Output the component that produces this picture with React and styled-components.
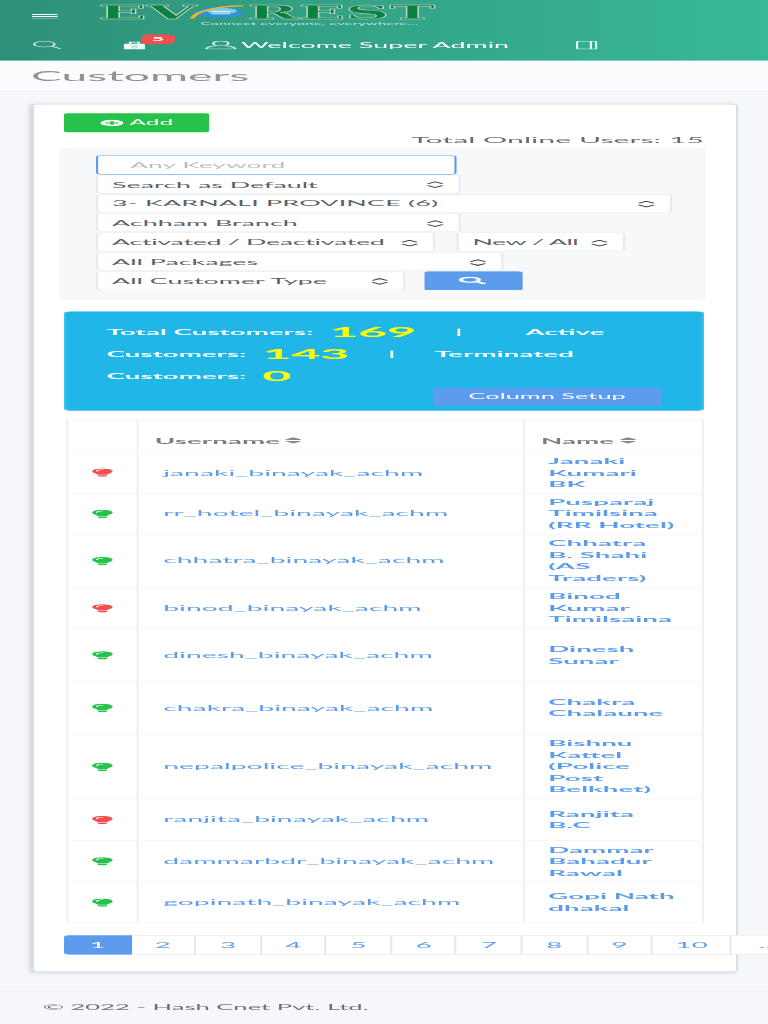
import React from "react";
import styled, { createGlobalStyle } from "styled-components";
import { FaLightbulb, FaPlusCircle, FaSearch, FaSort } from "react-icons/fa";

const GlobalStyle = createGlobalStyle`
  html, body {
    margin: 0;
    padding: 0;
    background: #f5f7fa;
    overflow: hidden;
  }
  #root {
    width: 768px;
    height: 1024px;
    overflow: hidden;
  }
  * {
    box-sizing: border-box;
  }
`;

// the whole page was photographed stretched, so it is built at phone width and scaled
const Stage = styled.div`
  width: 360px;
  min-height: 1736px;
  transform: scale(2.1333, 0.59);
  transform-origin: 0 0;
  font-family: Lato, "Open Sans", sans-serif;
  font-size: 13px;
  line-height: 19.5px;
  color: #58666e;
`;

const Header = styled.header`
  height: 103px;
  background: linear-gradient(90deg, #2e9178, #38b897);
  color: #fff;
`;

const HeaderTop = styled.div`
  height: 52px;
  display: flex;
  align-items: center;
  padding-left: 14.5px;
`;

const MenuBars = styled.div`
  width: 12px;
  height: 8.4px;
  margin-top: 2px;
  background: repeating-linear-gradient(#fff 0 1.6px, transparent 1.6px 3.4px);
`;

const LogoWrap = styled.svg`
  width: 162px;
  height: 46px;
  margin-left: 19.5px;
  flex-shrink: 0;
  overflow: visible;
`;

const HeaderBar = styled.div`
  height: 51px;
  display: flex;
  align-items: center;
  padding-left: 14.5px;
  padding-bottom: 3px;
`;

const Slot = styled.div`
  width: ${(p) => p.$width}px;
  margin-left: ${(p) => p.$left || 0}px;
  height: 16px;
  flex-shrink: 0;
  position: relative;
  display: flex;
  align-items: center;
`;

const Badge = styled.span`
  position: absolute;
  left: 8px;
  top: -10px;
  width: 16px;
  height: 17px;
  border-radius: 5px;
  background: #f05050;
  color: #fff;
  font-size: 10px;
  font-weight: 700;
  line-height: 17px;
  text-align: center;
`;

const Welcome = styled.span`
  font-size: 12.6px;
  margin-top: 2px;
  white-space: nowrap;
`;

const TitleBar = styled.div`
  height: 53px;
  background: #fbfcfd;
  border-bottom: 2px solid #edf0f4;
  padding: 14px 14.5px 0;
`;

const PageTitle = styled.h1`
  margin: 0;
  font-size: 21.7px;
  font-weight: 400;
  line-height: 24px;
  color: #929292;
`;

const Card = styled.main`
  width: 331px;
  margin: 20px 0 0 14.5px;
  padding: 15px 14.5px 28px;
  background: #fff;
  border: 1px solid #d6e0ea;
  border-radius: 3px;
  box-shadow: -1px 1px 3px rgba(120, 135, 150, 0.25);
`;

const AddButton = styled.button`
  display: flex;
  align-items: center;
  justify-content: center;
  gap: 3px;
  width: 68px;
  height: 32px;
  border: 0;
  border-radius: 2px;
  background: #27c24c;
  color: #fff;
  font: inherit;
  font-size: 11.5px;
  padding: 0;
`;

const OnlineUsers = styled.div`
  height: 22.5px;
  margin-top: 4px;
  text-align: right;
  font-size: 14.2px;
  line-height: 20px;
  color: #6b6b6b;
`;

const FilterPanel = styled.section`
  margin: 0 -1px 0 -2px;
  height: 257px;
  padding: 12.5px 0 0 17px;
  background: #f7f8fa;
  border-radius: 4px;
`;

const KeywordInput = styled.input`
  display: block;
  width: 169px;
  height: 32.5px;
  padding: 0 0 0 15px;
  border: 1px solid #5d9cec;
  border-radius: 3px;
  background: #fff;
  font: inherit;
  font-size: 12.4px;
  &::placeholder {
    color: #b6bcc4;
    opacity: 1;
  }
`;

const FieldRow = styled.div`
  display: flex;
  align-items: center;
  gap: ${(p) => p.$gap || 0}px;
  height: 32.8px;
`;

const SelectBox = styled.div`
  width: ${(p) => p.$width}px;
  height: 32px;
  flex-shrink: 0;
  display: flex;
  align-items: center;
  justify-content: space-between;
  padding: 3px 7.5px 0 6.5px;
  background: #fff;
  border: 1px solid #e6ebee;
  border-radius: 3px;
  font-size: 12.6px;
  letter-spacing: ${(p) => p.$spacing || 0}px;
  color: #5a6168;
  white-space: nowrap;
`;

const SearchButton = styled.button`
  width: 45.5px;
  height: 32px;
  border: 1px solid #5d9cec;
  border-radius: 2px;
  background: #5d9cec;
  color: #fff;
  padding: 0;
  display: flex;
  align-items: center;
  justify-content: center;
`;

const StatsPanel = styled.section`
  margin-top: 20.5px;
  height: 168px;
  padding: 15px 19px 0;
  background: #20b6e8;
  border: 1px solid #3cc0ec;
  border-radius: 3px;
  color: #fff;
`;

const StatsLine = styled.div`
  height: 37.5px;
  display: flex;
  align-items: center;
  white-space: nowrap;
`;

const StatLabel = styled.span`
  font-weight: 700;
  font-size: 13px;
`;

const StatValue = styled.span`
  margin-left: ${(p) => p.$left}px;
  width: ${(p) => p.$width}px;
  font-size: 23.4px;
  font-weight: 700;
  color: #ffff00;
`;

const Pipe = styled.span`
  margin-left: ${(p) => p.$left}px;
  margin-right: ${(p) => p.$right}px;
  font-weight: 700;
`;

const ColumnButton = styled.button`
  display: block;
  width: 107px;
  height: 31px;
  margin-left: auto;
  border: 0;
  border-radius: 2px;
  background: #5d9cec;
  color: #fff;
  font: inherit;
  font-size: 11.9px;
  padding: 0;
`;

const TableWrap = styled.div`
  margin: 15px 0 0 0.5px;
  width: 299px;
  border: 1px solid #eef0f2;
  overflow: hidden;
`;

const Table = styled.table`
  width: 100%;
  border-collapse: collapse;
  table-layout: fixed;
`;

const HeadCell = styled.th`
  height: 54.5px;
  padding: 0 0 9px 7.6px;
  vertical-align: bottom;
  text-align: left;
  font-weight: 700;
  color: #7d7d7d;
  border-left: 1px solid #eef0f2;
  &:first-child {
    border-left: 0;
  }
  svg {
    vertical-align: -1px;
    color: #888;
  }
`;

const Row = styled.tr`
  height: ${(p) => 9.8 + p.$lines * 20}px;
  border-top: 1px solid #f1f2f4;
`;

const Cell = styled.td`
  padding: 0;
  border-left: 1px solid #eef0f2;
  vertical-align: middle;
  &:first-child {
    border-left: 0;
  }
`;

const StatusCell = styled(Cell)`
  text-align: center;
  line-height: 0;
  color: ${(p) => (p.$on ? "#27c24c" : "#f05050")};
`;

const UserLink = styled.a`
  display: block;
  padding-left: 11.5px;
  font-size: 13.3px;
  color: #5d9cec;
  white-space: nowrap;
`;

const NameLink = styled.a`
  display: block;
  padding-left: 11px;
  color: #5d9cec;
  font-weight: 700;
  white-space: pre-line;
`;

const Pagination = styled.nav`
  display: flex;
  margin-top: 20px;
  height: 33px;
`;

const PageButton = styled.span`
  flex-shrink: 0;
  width: ${(p) => p.$width || 30.6}px;
  height: 33px;
  line-height: 31px;
  text-align: center;
  background: ${(p) => (p.$active ? "#5d9cec" : "#fff")};
  color: ${(p) => (p.$active ? "#fff" : "#5d9cec")};
  border: 1px solid ${(p) => (p.$active ? "#5d9cec" : "#e4e8ec")};
  border-left-width: ${(p) => (p.$active ? 1 : 0)}px;
  border-radius: ${(p) => (p.$active ? "3px 0 0 3px" : "0")};
`;

const Footer = styled.footer`
  margin-top: 31.6px;
  height: 60px;
  padding: 17px 20px 0;
  border-top: 2px solid #edf0f4;
  font-size: 12px;
  color: #6f6f6f;
`;

const Arrows = () => (
  <svg width="8" height="12" viewBox="0 0 8 12" fill="none" stroke="#444" strokeWidth="1.3">
    <path d="M.5 4.5 4 1.2 7.5 4.5M.5 7.5 4 10.8 7.5 7.5" />
  </svg>
);

const SearchLine = () => (
  <svg width="14" height="14" viewBox="0 0 14 14" fill="none" stroke="#d8f0e8" strokeWidth="1">
    <circle cx="5.8" cy="5.8" r="4.8" />
    <path d="M9.3 9.3 13.5 13.5" />
  </svg>
);

const Suitcase = () => (
  <svg width="10" height="15" viewBox="0 0 10 15">
    <path d="M3 5V2.5H7V5" fill="none" stroke="#f2fbf8" strokeWidth="1.2" />
    <rect y="5" width="10" height="10" rx="1" fill="#f2fbf8" />
    <rect x="3.4" y="7" width="3.2" height="6" fill="#c8e8de" />
  </svg>
);

const UserLine = () => (
  <svg width="15" height="15" viewBox="0 0 15 15" fill="none" stroke="#eafaf5" strokeWidth="1">
    <ellipse cx="7.5" cy="4.6" rx="3.6" ry="4" />
    <path d="M5.4 8.6C2.6 9.6.8 11 .6 14H14.4C14.2 11 12.4 9.6 9.6 8.6" />
  </svg>
);

const TabletLine = () => (
  <svg width="10" height="15" viewBox="0 0 10 15" fill="none" stroke="#eafaf5" strokeWidth="1">
    <rect x=".5" y=".8" width="9" height="13.4" rx="1" />
    <path d="M7 .8V14.2" />
  </svg>
);

const Logo = () => (
  <LogoWrap viewBox="0 0 162 46">
    <text
      x="0"
      y="29"
      fontFamily="DejaVu Serif, serif"
      fontWeight="700"
      fontSize="30"
      fill="#0b8140"
      stroke="#c9d6ce"
      strokeWidth="0.7"
      textLength="46"
      lengthAdjust="spacingAndGlyphs"
    >
      EV
    </text>
    <text
      x="70"
      y="29"
      fontFamily="DejaVu Serif, serif"
      fontWeight="700"
      fontSize="30"
      fill="#0b8140"
      stroke="#c9d6ce"
      strokeWidth="0.7"
      textLength="88"
      lengthAdjust="spacingAndGlyphs"
    >
      REST
    </text>
    <ellipse cx="57" cy="18" rx="11" ry="9.5" fill="#2f93cf" />
    <ellipse cx="58" cy="15.5" rx="7" ry="5" fill="#7fcbe9" />
    <path d="M44 28C46 15 57 7 68 7" fill="none" stroke="#f2b632" strokeWidth="2.2" />
    <path d="M53 16.5H62M53 20.5H62" stroke="#e4f5fa" strokeWidth="1.4" />
    <text x="48" y="39" fontFamily="Lato, sans-serif" fontSize="6.9" fill="#cdebe1" letterSpacing=".1">
      Connect everyone, everywhere...
    </text>
  </LogoWrap>
);

const customers = [
  { user: "janaki_binayak_achm", name: "Janaki\nKumari\nBK", on: false, lines: 3 },
  { user: "rr_hotel_binayak_achm", name: "Pusparaj\nTimilsina\n(RR Hotel)", on: true, lines: 3 },
  { user: "chhatra_binayak_achm", name: "Chhatra\nB. Shahi\n(AS\nTraders)", on: true, lines: 4 },
  { user: "binod_binayak_achm", name: "Binod\nKumar\nTimilsaina", on: false, lines: 3 },
  { user: "dinesh_binayak_achm", name: "Dinesh\nSunar", on: true, lines: 4 },
  { user: "chakra_binayak_achm", name: "Chakra\nChalaune", on: true, lines: 4 },
  { user: "nepalpolice_binayak_achm", name: "Bishnu\nKattel\n(Police\nPost\nBelkhet)", on: true, lines: 5 },
  { user: "ranjita_binayak_achm", name: "Ranjita\nB.C", on: false, lines: 3 },
  { user: "dammarbdr_binayak_achm", name: "Dammar\nBahadur\nRawal", on: true, lines: 3 },
  { user: "gopinath_binayak_achm", name: "Gopi Nath\ndhakal", on: true, lines: 3 },
];

const pages = ["2", "3", "4", "5", "6", "7", "8", "9"];

export default function App() {
  return (
    <>
      <GlobalStyle />
      <Stage>
        <Header>
          <HeaderTop>
            <MenuBars />
            <Logo />
          </HeaderTop>
          <HeaderBar>
            <Slot $width={43.5}>
              <SearchLine />
            </Slot>
            <Slot $width={38}>
              <Suitcase />
              <Badge>5</Badge>
            </Slot>
            <Slot $width={17}>
              <UserLine />
            </Slot>
            <Welcome>Welcome Super Admin</Welcome>
            <Slot $width={10} $left={31}>
              <TabletLine />
            </Slot>
          </HeaderBar>
        </Header>

        <TitleBar>
          <PageTitle>Customers</PageTitle>
        </TitleBar>

        <Card>
          <AddButton>
            <FaPlusCircle size={11} />
            Add
          </AddButton>
          <OnlineUsers>Total Online Users: 15</OnlineUsers>

          <FilterPanel>
            <KeywordInput placeholder="Any Keyword" readOnly />
            <FieldRow>
              <SelectBox $width={171}>
                Search as Default
                <Arrows />
              </SelectBox>
            </FieldRow>
            <FieldRow>
              <SelectBox $width={270} $spacing={0.08}>
                3- KARNALI PROVINCE (6)
                <Arrows />
              </SelectBox>
            </FieldRow>
            <FieldRow>
              <SelectBox $width={171}>
                Achham Branch
                <Arrows />
              </SelectBox>
            </FieldRow>
            <FieldRow $gap={10}>
              <SelectBox $width={159} $spacing={-0.16}>
                Activated / Deactivated
                <Arrows />
              </SelectBox>
              <SelectBox $width={79} $spacing={-0.26}>
                New / All
                <Arrows />
              </SelectBox>
            </FieldRow>
            <FieldRow>
              <SelectBox $width={191}>
                All Packages
                <Arrows />
              </SelectBox>
            </FieldRow>
            <FieldRow $gap={9}>
              <SelectBox $width={145}>
                All Customer Type
                <Arrows />
              </SelectBox>
              <SearchButton>
                <FaSearch size={13} />
              </SearchButton>
            </FieldRow>
          </FilterPanel>

          <StatsPanel>
            <StatsLine>
              <StatLabel>Total Customers:</StatLabel>
              <StatValue $left={7.5} $width={38}>169</StatValue>
              <Pipe $left={21} $right={29.5}>|</Pipe>
              <StatLabel>Active</StatLabel>
            </StatsLine>
            <StatsLine>
              <StatLabel>Customers:</StatLabel>
              <StatValue $left={7.5} $width={38}>143</StatValue>
              <Pipe $left={21} $right={18.5}>|</Pipe>
              <StatLabel>Terminated</StatLabel>
            </StatsLine>
            <StatsLine>
              <StatLabel>Customers:</StatLabel>
              <StatValue $left={7.5} $width={13}>0</StatValue>
            </StatsLine>
            <ColumnButton>Column Setup</ColumnButton>
          </StatsPanel>

          <TableWrap>
            <Table>
              <colgroup>
                <col style={{ width: 33 }} />
                <col style={{ width: 181 }} />
                <col />
              </colgroup>
              <thead>
                <tr>
                  <HeadCell />
                  <HeadCell>
                    Username<FaSort size={13} />
                  </HeadCell>
                  <HeadCell>
                    Name<FaSort size={13} />
                  </HeadCell>
                </tr>
              </thead>
              <tbody>
                {customers.map((c) => (
                  <Row key={c.user} $lines={c.lines}>
                    <StatusCell $on={c.on}>
                      <FaLightbulb size={14} />
                    </StatusCell>
                    <Cell>
                      <UserLink>{c.user}</UserLink>
                    </Cell>
                    <Cell>
                      <NameLink>{c.name}</NameLink>
                    </Cell>
                  </Row>
                ))}
              </tbody>
            </Table>
          </TableWrap>

          <Pagination>
            <PageButton $active $width={31.5}>1</PageButton>
            {pages.map((p) => (
              <PageButton key={p}>{p}</PageButton>
            ))}
            <PageButton $width={37}>10</PageButton>
            <PageButton $width={35}>...</PageButton>
          </Pagination>
        </Card>

        <Footer>© 2022 - Hash Cnet Pvt. Ltd.</Footer>
      </Stage>
    </>
  );
}
